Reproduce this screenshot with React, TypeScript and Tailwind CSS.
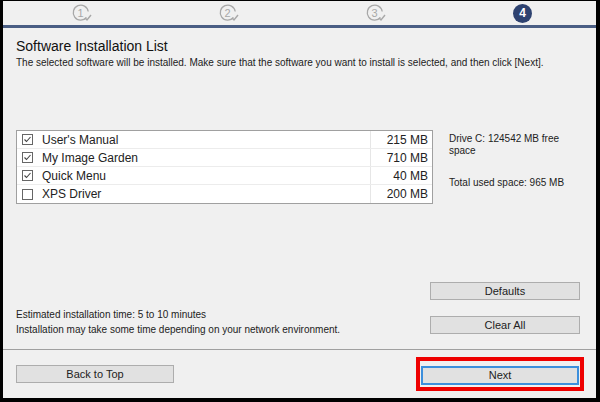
import React from "react";

const items = [
  { name: "User's Manual", size: "215 MB", checked: true },
  { name: "My Image Garden", size: "710 MB", checked: true },
  { name: "Quick Menu", size: "40 MB", checked: true },
  { name: "XPS Driver", size: "200 MB", checked: false },
];

function DoneStep({ n }: { n: number }) {
  return (
    <svg width="22" height="20" viewBox="0 0 22 20">
      <path
        d="M15.5 14.5 A7.5 7.5 0 1 1 17.2 8.5"
        fill="none"
        stroke="#a8a8a8"
        strokeWidth="1.3"
      />
      <path d="M14 15 L16 17 L20 12" fill="none" stroke="#a8a8a8" strokeWidth="1.4" />
      <text
        x="9.5"
        y="14"
        textAnchor="middle"
        fontSize="11"
        fill="#a8a8a8"
        fontFamily="Liberation Sans, Arial, sans-serif"
      >
        {n}
      </text>
    </svg>
  );
}

function CheckBox({ checked }: { checked: boolean }) {
  return (
    <svg width="11" height="11" viewBox="0 0 11 11">
      <rect x="0.5" y="0.5" width="10" height="10" fill="#fff" stroke="#666" />
      {checked && (
        <path d="M2.5 5.5 L4.5 7.5 L8.5 3" fill="none" stroke="#444" strokeWidth="1.1" />
      )}
    </svg>
  );
}

function WinButton({ label, className = "" }: { label: string; className?: string }) {
  return (
    <button
      className={
        "h-[18px] border border-[#adadad] bg-[#e1e1e1] text-[11px] text-[#222] leading-none " +
        className
      }
    >
      {label}
    </button>
  );
}

export default function App() {
  return (
    <div
      className="h-[402px] w-[600px] bg-black pl-[3px] pr-[4px] pt-[1px] pb-[4px]"
      style={{ fontFamily: "'Liberation Sans', Arial, sans-serif" }}
    >
      <div className="flex h-full flex-col bg-[#f0f0f0]">
        <div className="grid h-[27px] grid-cols-4 items-center justify-items-center border-b-[3px] border-[#4a5e84] pl-[6px]">
          <DoneStep n={1} />
          <DoneStep n={2} />
          <DoneStep n={3} />
          <div className="flex h-[19px] w-[19px] items-center justify-center rounded-full bg-[#2e4270] text-[12px] font-bold text-white">
            4
          </div>
        </div>

        <div className="flex flex-1 flex-col px-[13px]">
          <h1 className="mt-[9px] text-[14px] leading-[18px] text-[#111]">
            Software Installation List
          </h1>
          <p className="mt-[2px] text-[10px] leading-[12px] text-[#222]">
            The selected software will be installed. Make sure that the software you want to install is selected, and then click [Next].
          </p>

          <div className="mt-[61px] flex">
            <div className="w-[417px] border border-[#a0a0a0] bg-white">
              {items.map((it, i) => (
                <div
                  key={it.name}
                  className={
                    "flex h-[18px] items-center text-[12px] text-[#222] " +
                    (i < items.length - 1 ? "border-b border-[#ececec]" : "")
                  }
                >
                  <div className="flex h-full w-[354px] items-center gap-[9px] border-r border-[#e6e6e6] pl-[5px]">
                    <CheckBox checked={it.checked} />
                    <span>{it.name}</span>
                  </div>
                  <div className="flex-1 pr-[4px] text-right">{it.size}</div>
                </div>
              ))}
            </div>
            <div className="ml-[16px] w-[120px] pt-[3px] text-[10px] leading-[12px] text-[#222]">
              <p>Drive C: 124542 MB free space</p>
              <p className="mt-[20px]">Total used space: 965 MB</p>
            </div>
          </div>

          <div className="mt-[78px] flex items-end justify-between">
            <div className="mb-[-3px] text-[10px] leading-[15px] text-[#222]">
              <p>Estimated installation time: 5 to 10 minutes</p>
              <p>Installation may take some time depending on your network environment.</p>
            </div>
            <div className="flex flex-col gap-[16px] pr-[3px]">
              <WinButton label="Defaults" className="w-[150px]" />
              <WinButton label="Clear All" className="w-[150px]" />
            </div>
          </div>
        </div>

        <div className="flex h-[49px] items-center justify-between border-t border-[#a0a0a0] pl-[13px] pr-[12px]">
          <WinButton label="Back to Top" className="w-[158px]" />
          <div className="border-[4px] border-[#ee0000] p-[1px]">
            <button className="h-[19px] w-[158px] border-2 border-[#3c8fdc] bg-[#e1e1e1] text-[11px] leading-none text-[#222]">
              Next
            </button>
          </div>
        </div>
      </div>
    </div>
  );
}
